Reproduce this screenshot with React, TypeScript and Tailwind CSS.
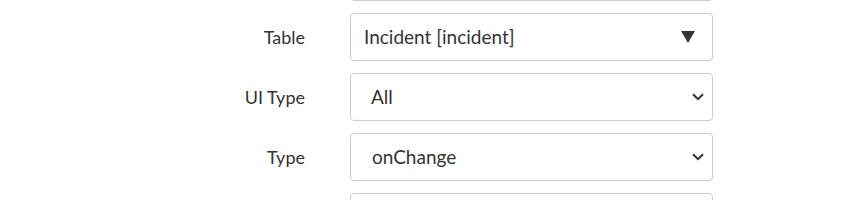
import React from 'react';

const Chevron = () => (
    <svg width="12" height="8" viewBox="0 0 12 8" className="text-[#333]">
        <path d="M1 1.2 L6 6.2 L11 1.2" fill="none" stroke="currentColor" strokeWidth="2" />
    </svg>
);

const Row = ({ label, children }: { label: string; children?: React.ReactNode }) => (
    <div className="flex items-center h-[48px]">
        <div className="w-[305px] text-right text-[18px] text-[#333]">{label}</div>
        <div className="ml-[45px] w-[363px] h-[48px] rounded-[4px] border border-[#cccccc] bg-white flex items-center">
            {children}
        </div>
    </div>
);

export default function App() {
    return (
        <div className="w-[843px] h-[200px] overflow-hidden bg-white" style={{ fontFamily: 'Lato, "Noto Sans", sans-serif' }}>
            <div className="flex flex-col gap-[12px] mt-[-47px]">
                <Row label="" />
                <Row label="Table">
                    <span className="pl-[13px] text-[19px] text-[#333] flex-1">Incident [incident]</span>
                    <span className="pr-[17px] flex">
                        <svg width="14" height="12" viewBox="0 0 14 12"><path d="M0 0 H14 L7 12 Z" fill="#333" /></svg>
                    </span>
                </Row>
                <Row label="UI Type">
                    <span className="pl-[20px] text-[19px] text-[#333] flex-1">All</span>
                    <span className="pr-[8px] flex"><Chevron /></span>
                </Row>
                <Row label="Type">
                    <span className="pl-[21px] text-[19px] text-[#333] flex-1">onChange</span>
                    <span className="pr-[8px] flex"><Chevron /></span>
                </Row>
                <Row label="" />
            </div>
        </div>
    );
}
